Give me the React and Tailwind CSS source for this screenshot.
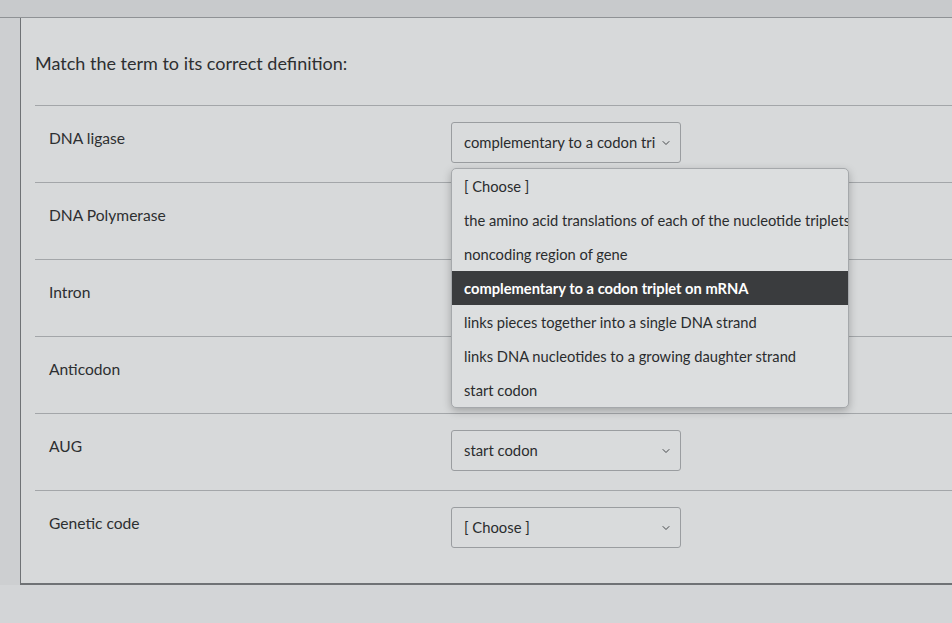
import React from 'react';
import { ChevronDown } from 'lucide-react';

const rows = [
    { term: 'DNA ligase', value: 'complementary to a codon tri', open: true },
    { term: 'DNA Polymerase', value: null },
    { term: 'Intron', value: null },
    { term: 'Anticodon', value: null },
    { term: 'AUG', value: 'start codon' },
    { term: 'Genetic code', value: '[ Choose ]' },
];

const options = [
    '[ Choose ]',
    'the amino acid translations of each of the nucleotide triplets',
    'noncoding region of gene',
    'complementary to a codon triplet on mRNA',
    'links pieces together into a single DNA strand',
    'links DNA nucleotides to a growing daughter strand',
    'start codon',
];

const Select = ({ value }) => (
    <div className="flex h-[41px] w-[230px] items-center justify-between rounded-[3px] border border-[#9a9da0] bg-[#d9dbdc] pl-3 pr-2 text-[14.8px] text-[#2a2c2e]">
        <span className="truncate whitespace-nowrap">{value}</span>
        <ChevronDown size={12} strokeWidth={2} className="shrink-0 text-[#45484b]" />
    </div>
);

const App = () => {
    return (
        <div className="flex h-[623px] w-[952px] flex-col overflow-hidden bg-[#cdcfd1] font-['Lato','Noto_Sans',sans-serif] text-[#2d2f31]">
            {/* header strip */}
            <div className="h-[18px] shrink-0 border-b border-[#8f9295] bg-[#c8cacc]"></div>

            <div className="ml-[20px] flex h-[567px] flex-col border-b-2 border-l border-[#6f7275] bg-[#d7d9da]">
                <div className="flex h-[87px] items-center pl-[14px] pt-[4px] text-[18px]">
                    Match the term to its correct definition:
                </div>

                <div className="ml-[14px] flex flex-col">
                    {rows.map((row, i) => (
                        <div key={row.term} className="relative flex h-[77px] border-t border-[#a3a6a9]">
                            <div className="w-[416px] shrink-0 pl-[14px] pt-[21px] text-[15.6px]">{row.term}</div>
                            <div className="pt-[16px]">
                                {row.value && <Select value={row.value} />}
                            </div>

                            {row.open && (
                                <div className="absolute left-[416px] top-[62px] z-10 w-[398px] overflow-hidden rounded-[5px] border border-[#a5a8ab] bg-[#dcdedf] shadow-[0_3px_8px_rgba(0,0,0,0.25)]">
                                    {options.map((opt, j) => (
                                        <div
                                            key={opt}
                                            className={`flex h-[34px] items-center whitespace-nowrap px-3 text-[14.7px] ${j === 3 ? 'bg-[#3a3c3e] font-bold text-white' : 'text-[#2a2c2e]'}`}
                                        >
                                            {opt}
                                        </div>
                                    ))}
                                </div>
                            )}
                        </div>
                    ))}
                </div>
            </div>

            <div className="flex-1 bg-[#d3d5d7]"></div>
        </div>
    );
};

export default App;
